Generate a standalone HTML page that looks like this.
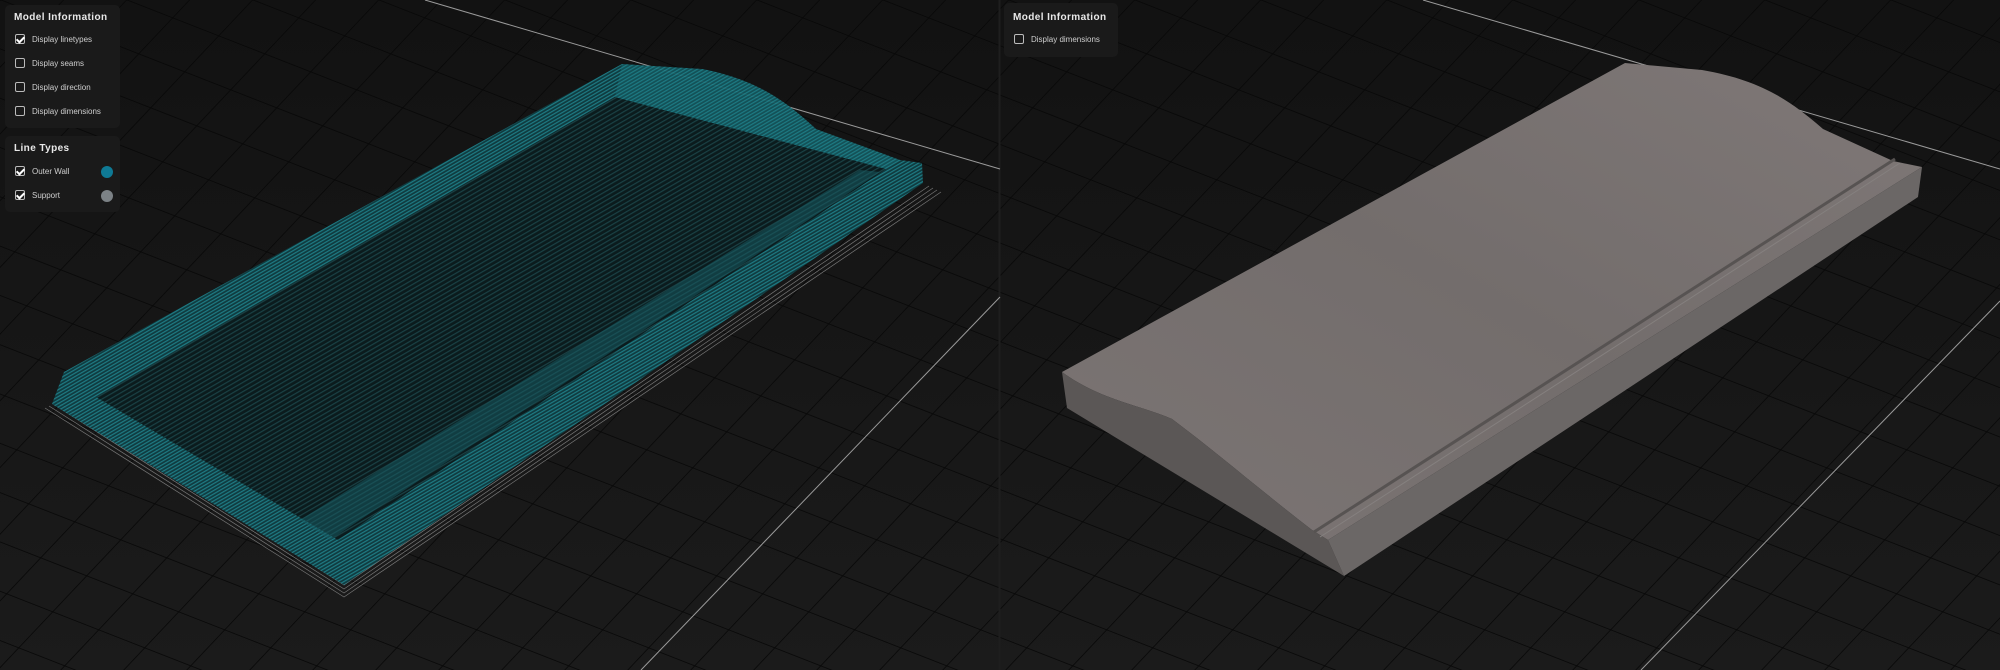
<!DOCTYPE html>
<html><head><meta charset="utf-8"><style>
html,body{margin:0;padding:0;background:#161616;}
body{width:2000px;height:670px;overflow:hidden;position:relative;font-family:"Liberation Sans",sans-serif;}
svg{position:absolute;left:0;top:0;}
.panel{position:absolute;background:#1a1a1a;border-radius:5px;color:#ddd;}
.title{position:absolute;font-size:10px;font-weight:bold;letter-spacing:.4px;color:#e8e8e8;}
.row{position:absolute;font-size:8px;color:#cfcfcf;display:flex;align-items:center;}
.cb{width:10px;height:10px;border:1px solid #bbb;border-radius:2px;margin-right:7px;box-sizing:border-box;position:relative;}
.cb.on::after{content:"";position:absolute;left:2px;top:0px;width:3px;height:6px;border:solid #fff;border-width:0 2px 2px 0;transform:rotate(45deg);}
.dot{position:absolute;width:12px;height:12px;border-radius:50%;}
</style></head><body>
<svg width="2000" height="670" viewBox="0 0 2000 670">
<defs>
<pattern id="grid" patternUnits="userSpaceOnUse" width="1" height="1" patternTransform="matrix(46 18 34 -36 0 0)">
<path d="M0 0 L1 0 M0 0 L0 1" stroke="#080808" stroke-width="0.035" fill="none"/>
</pattern>
<linearGradient id="bg" x1="0" y1="0" x2="0" y2="1">
<stop offset="0" stop-color="#121212"/><stop offset="1" stop-color="#1b1b1b"/>
</linearGradient>
<pattern id="stripe" patternUnits="userSpaceOnUse" width="4" height="4" patternTransform="rotate(-30)">
<rect width="4" height="4" fill="#0b1b1d"/><rect width="4" height="1.2" fill="#1a4145"/>
</pattern>
<pattern id="stripe2" patternUnits="userSpaceOnUse" width="3" height="3" patternTransform="rotate(-30)">
<rect width="3" height="3" fill="#0f3f44"/><rect width="3" height="1.2" fill="#1f8690"/>
</pattern>
<linearGradient id="gtop" x1="0" y1="1" x2="1" y2="0">
<stop offset="0" stop-color="#7c7574"/><stop offset="0.5" stop-color="#736d6c"/><stop offset="1" stop-color="#7f7877"/>
</linearGradient>
</defs>
<rect width="2000" height="670" fill="url(#bg)"/>
<rect width="2000" height="670" fill="url(#grid)"/>
<line x1="999.5" y1="0" x2="999.5" y2="670" stroke="#1e1e1e" stroke-width="2"/>
<line x1="425" y1="0" x2="1000" y2="169" stroke="#9a9a9a" stroke-width="1"/>
<line x1="1000" y1="297" x2="641" y2="670" stroke="#9a9a9a" stroke-width="1"/>
<line x1="1423" y1="0" x2="2000" y2="169" stroke="#9a9a9a" stroke-width="1"/>
<line x1="2000" y1="301" x2="1641" y2="670" stroke="#9a9a9a" stroke-width="1"/>

<g fill="none" stroke="#777" stroke-width="0.7">
<polyline points="45,408 344,597 941,192"/>
<polyline points="49,406 344,593 937,190"/>
<polyline points="53,404 344,589 933,188"/>
<polyline points="57,402 344,585 929,186"/>
</g>
<path d="M64,372 L622,64 L702,69 C760,80 790,105 816,129 L900,160 L922,163 L923,183 L344,585 L52,404 Z" fill="url(#stripe2)" opacity="0.9"/>
<path d="M96,397 L615,97 L886,169 L338,540 Z" fill="url(#stripe)"/>
<path d="M300,520 L860,170 L880,172 L330,540 Z" fill="#176068" opacity="0.5"/>
<path d="M622,64 L702,69 C760,80 790,105 816,129 L900,160 L886,169 L615,97 Z" fill="#1e7c85" opacity="0.35"/>

<path d="M1062,372 L1625,63 L1702,70 C1760,80 1790,100 1823,129 L1893,161 L1922,167 L1328,540 L1312,530 C1260,490 1220,455 1172,419 C1140,405 1100,400 1062,372 Z" fill="url(#gtop)"/>
<path d="M1062,372 C1100,400 1140,405 1172,419 C1220,455 1260,490 1312,530 L1328,540 L1344,576 L1067,408 Z" fill="#5b5756"/>
<path d="M1922,167 L1918,197 L1344,576 L1328,540 Z" fill="#6b6766"/>
<line x1="1314" y1="532" x2="1895" y2="159" stroke="#575352" stroke-width="3"/>
<line x1="1320" y1="537" x2="1900" y2="163" stroke="#85807f" stroke-width="1"/>
</svg>

<div class="panel" style="left:5px;top:5px;width:115px;height:123px;">
<div class="title" style="left:9px;top:7px;">Model Information</div>
<div class="row" style="left:10px;top:29px;"><div class="cb on"></div>Display linetypes</div>
<div class="row" style="left:10px;top:53px;"><div class="cb"></div>Display seams</div>
<div class="row" style="left:10px;top:77px;"><div class="cb"></div>Display direction</div>
<div class="row" style="left:10px;top:101px;"><div class="cb"></div>Display dimensions</div>
</div>
<div class="panel" style="left:5px;top:136px;width:115px;height:76px;">
<div class="title" style="left:9px;top:7px;">Line Types</div>
<div class="row" style="left:10px;top:30px;"><div class="cb on"></div>Outer Wall</div>
<div class="row" style="left:10px;top:54px;"><div class="cb on"></div>Support</div>
<div class="dot" style="left:96px;top:30px;background:#0f7a95;"></div>
<div class="dot" style="left:96px;top:54px;background:#7c8286;"></div>
</div>
<div class="panel" style="left:1004px;top:3px;width:114px;height:54px;">
<div class="title" style="left:9px;top:9px;">Model Information</div>
<div class="row" style="left:10px;top:31px;"><div class="cb"></div>Display dimensions</div>
</div>
</body></html>
